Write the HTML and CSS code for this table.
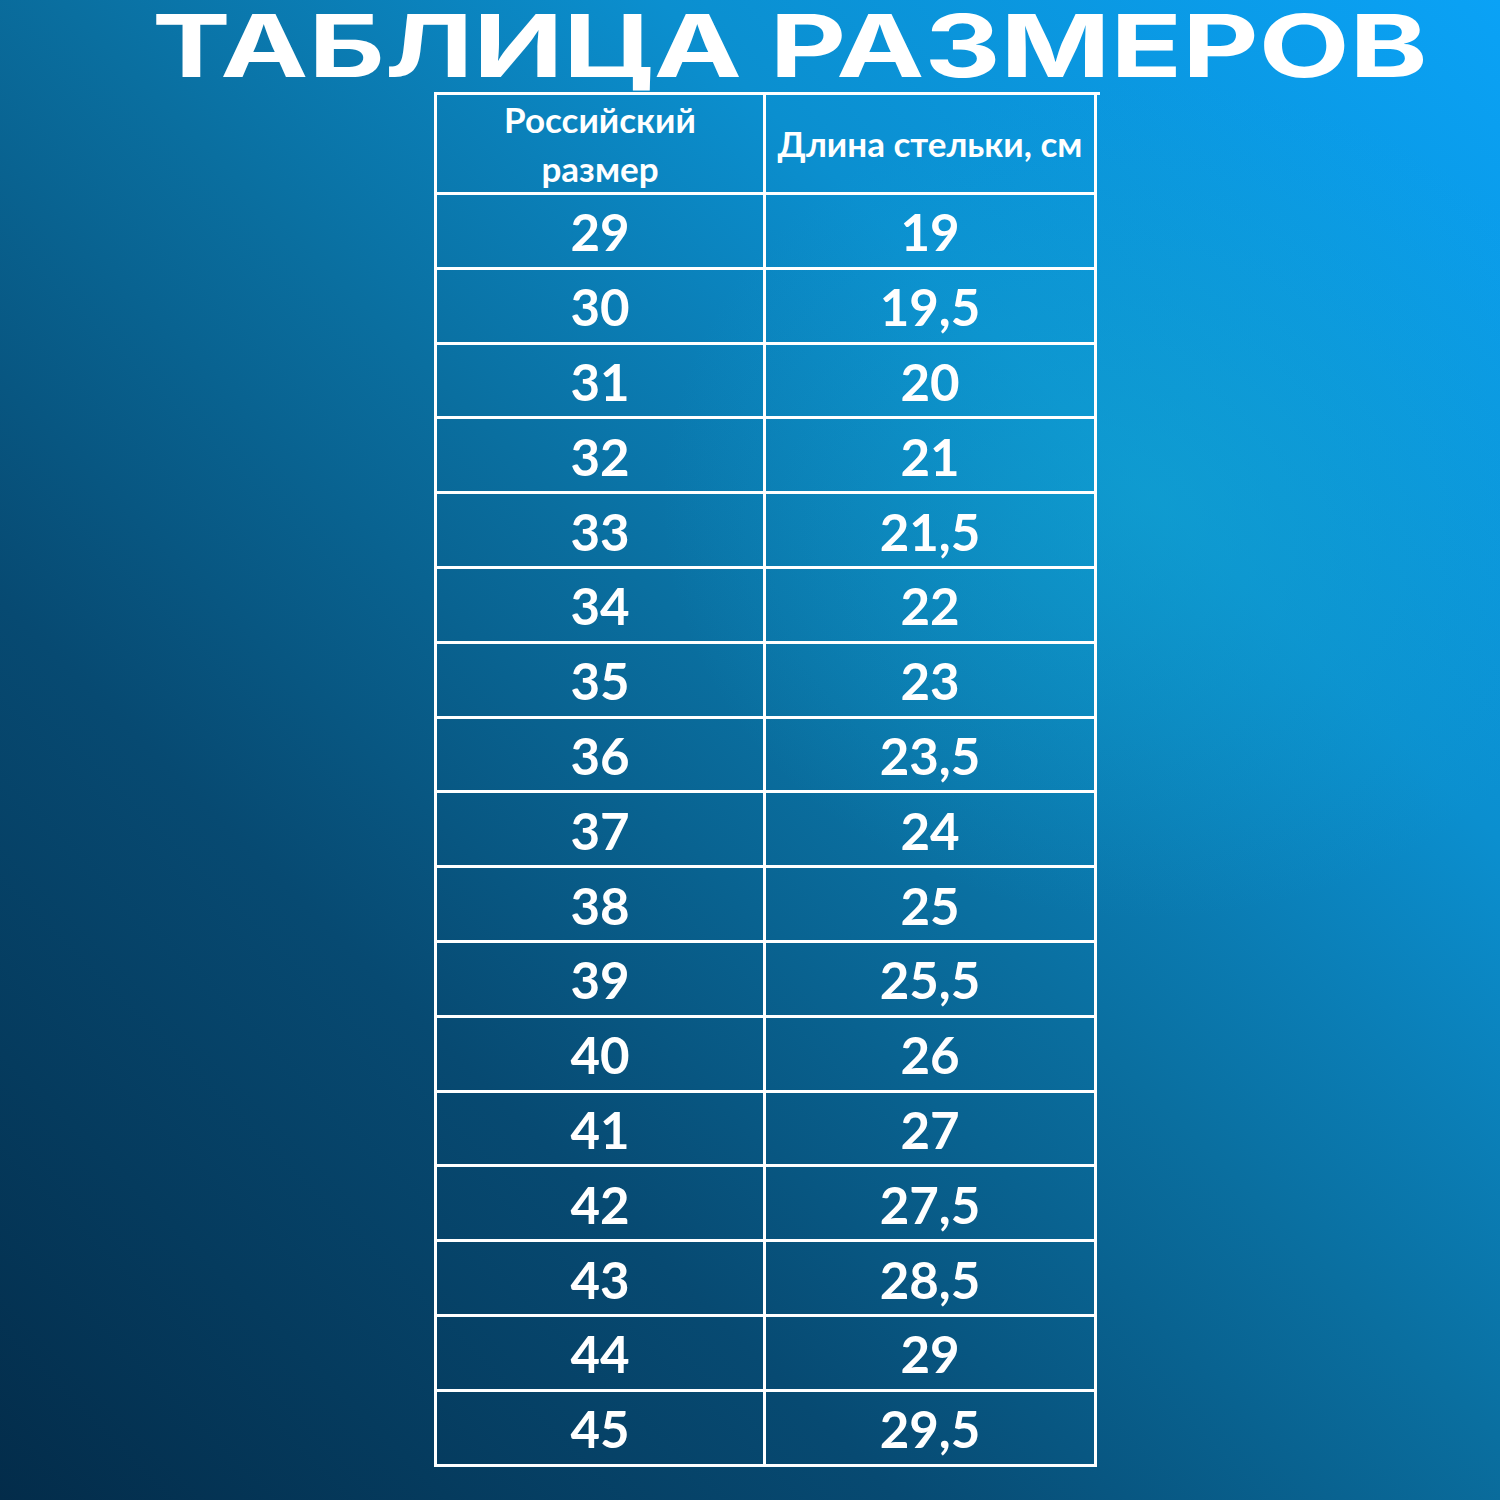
FILE: index.html
```html
<!DOCTYPE html>
<html lang="ru">
<head>
<meta charset="utf-8">
<title>Таблица размеров</title>
<link rel="stylesheet" href="styles.css">
</head>
<body>
<div class="page">
  <header class="title-bar">
    <h1 class="title">ТАБЛИЦА РАЗМЕРОВ</h1>
  </header>
  <div class="size-table">
    <div class="cell head"><span>Российский<br>размер</span></div>
    <div class="cell head"><span>Длина стельки, см</span></div>
    <div class="cell">29</div><div class="cell">19</div>
    <div class="cell">30</div><div class="cell">19,5</div>
    <div class="cell">31</div><div class="cell">20</div>
    <div class="cell">32</div><div class="cell">21</div>
    <div class="cell">33</div><div class="cell">21,5</div>
    <div class="cell">34</div><div class="cell">22</div>
    <div class="cell">35</div><div class="cell">23</div>
    <div class="cell">36</div><div class="cell">23,5</div>
    <div class="cell">37</div><div class="cell">24</div>
    <div class="cell">38</div><div class="cell">25</div>
    <div class="cell">39</div><div class="cell">25,5</div>
    <div class="cell">40</div><div class="cell">26</div>
    <div class="cell">41</div><div class="cell">27</div>
    <div class="cell">42</div><div class="cell">27,5</div>
    <div class="cell">43</div><div class="cell">28,5</div>
    <div class="cell">44</div><div class="cell">29</div>
    <div class="cell">45</div><div class="cell">29,5</div>
  </div>
</div>
</body>
</html>
```
FILE: styles.css
```css
html, body {
  margin: 0;
  padding: 0;
}
.page {
  width: 1500px;
  height: 1500px;
  overflow: hidden;
  color: #fff;
  background:
    radial-gradient(ellipse 700px 600px at 1150px 500px, rgba(20, 170, 210, 0.45), rgba(20, 170, 210, 0) 70%),
    linear-gradient(to top right, #032c4a 0%, #074a72 30%, #0a6fa0 52%, #0b8fcf 72%, #0aa2f6 100%);
  display: flex;
  flex-direction: column;
}
.title-bar {
  padding-left: 80px;
  display: flex;
  justify-content: center;
}
.title {
  margin: -6px 0 -6px;
  font-family: Inter, "DejaVu Sans", sans-serif;
  font-weight: 700;
  font-size: 86px;
  line-height: 104px;
  white-space: nowrap;
  display: inline-block;
  transform: scaleX(1.372);
  transform-origin: center;
}
.size-table {
  margin-left: 434px;
  width: 663px;
  display: grid;
  grid-template-columns: 329px 331px;
  grid-template-rows: 100px repeat(17, 74.8px);
  border-top: 3px solid #fff;
  border-left: 3px solid #fff;
  font-family: Lato, "Open Sans", sans-serif;
  font-weight: bold;
}
.cell {
  box-sizing: border-box;
  border-right: 3px solid #fff;
  border-bottom: 3px solid #fff;
  display: flex;
  align-items: center;
  justify-content: center;
  font-size: 51px;
  padding-top: 2px;
}
.cell.head {
  font-size: 35px;
  line-height: 49px;
  text-align: center;
  padding-top: 0;
  white-space: nowrap;
}
```
